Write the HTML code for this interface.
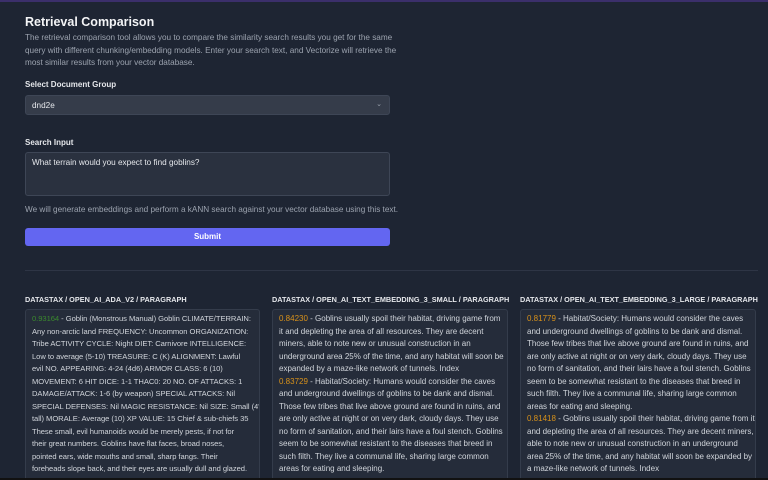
<!DOCTYPE html><html><head><style>
html,body{margin:0;width:768px;height:480px;overflow:hidden}
body{background:#1e2533;font-family:"Liberation Sans",sans-serif;color:#e5e7eb;position:relative}
.top{position:absolute;top:0;left:0;width:768px;height:2px;background:#3b2f6b}
.a{position:absolute}
h1{position:absolute;left:25px;top:15px;margin:0;font-size:12.5px;font-weight:bold;color:#f3f4f6}
.desc{left:25px;top:32px;width:375px;font-size:8.2px;line-height:12.5px;color:#9ca3af}
.lab{font-size:8px;font-weight:bold;color:#e5e7eb}
.box{border:1px solid #3e4656;border-radius:3px;background:#2a313f;box-sizing:border-box}
.hd{font-size:7.3px;font-weight:bold;color:#e5e7eb;white-space:nowrap}
.res{font-size:8px;line-height:12.5px;color:#d1d5db;padding:3px 6px;background:#252c3a;border:1px solid #343c4b;border-radius:3px;box-sizing:border-box;height:175px;overflow:hidden;white-space:nowrap}
.g{color:#3b8a2e}.o{color:#d9921a}
</style></head><body>
<div class="top"></div>
<h1>Retrieval Comparison</h1>
<div class="a desc">The retrieval comparison tool allows you to compare the similarity search results you get for the same query with different chunking/embedding models. Enter your search text, and Vectorize will retrieve the most similar results from your vector database.</div>
<div class="a lab" style="left:25px;top:80px">Select Document Group</div>
<div class="a box" style="left:25px;top:95px;width:365px;height:20px;background:#353c4a;font-size:8.2px;padding:5px 6px;color:#e5e7eb">dnd2e<span style="position:absolute;right:7px;top:4px;color:#9ca3af;font-size:7px">&#8964;</span></div>
<div class="a lab" style="left:25px;top:138px">Search Input</div>
<div class="a box" style="left:25px;top:152px;width:365px;height:44px;font-size:8.2px;padding:5px 6px">What terrain would you expect to find goblins?</div>
<div class="a" style="left:25px;top:205px;font-size:8.2px;color:#9ca3af">We will generate embeddings and perform a kANN search against your vector database using this text.</div>
<div class="a" style="left:25px;top:228px;width:365px;height:18px;background:#6366f1;border-radius:3px;font-size:8px;font-weight:bold;text-align:center;line-height:18px;color:#fff">Submit</div>
<div class="a" style="left:25px;top:270px;width:733px;height:1px;background:#2e3545"></div>
<div class="a hd" style="left:25px;top:295px">DATASTAX / OPEN_AI_ADA_V2 / PARAGRAPH</div>
<div class="a hd" style="left:272px;top:295px">DATASTAX / OPEN_AI_TEXT_EMBEDDING_3_SMALL / PARAGRAPH</div>
<div class="a hd" style="left:520px;top:295px">DATASTAX / OPEN_AI_TEXT_EMBEDDING_3_LARGE / PARAGRAPH</div>
<div class="a res" style="left:25px;top:309px;width:235px;font-size:7.6px;letter-spacing:-0.05px"><span class="g">0.93164</span> - Goblin (Monstrous Manual) Goblin CLIMATE/TERRAIN:<br>Any non-arctic land FREQUENCY: Uncommon ORGANIZATION:<br>Tribe ACTIVITY CYCLE: Night DIET: Carnivore INTELLIGENCE:<br>Low to average (5-10) TREASURE: C (K) ALIGNMENT: Lawful<br>evil NO. APPEARING: 4-24 (4d6) ARMOR CLASS: 6 (10)<br>MOVEMENT: 6 HIT DICE: 1-1 THAC0: 20 NO. OF ATTACKS: 1<br>DAMAGE/ATTACK: 1-6 (by weapon) SPECIAL ATTACKS: Nil<br>SPECIAL DEFENSES: Nil MAGIC RESISTANCE: Nil SIZE: Small (4'<br>tall) MORALE: Average (10) XP VALUE: 15 Chief &amp; sub-chiefs 35<br>These small, evil humanoids would be merely pests, if not for<br>their great numbers. Goblins have flat faces, broad noses,<br>pointed ears, wide mouths and small, sharp fangs. Their<br>foreheads slope back, and their eyes are usually dull and glazed.</div>
<div class="a res" style="left:272px;top:309px;width:236px"><span class="o">0.84230</span> - Goblins usually spoil their habitat, driving game from<br>it and depleting the area of all resources. They are decent<br>miners, able to note new or unusual construction in an<br>underground area 25% of the time, and any habitat will soon be<br>expanded by a maze-like network of tunnels. Index<br><span class="o">0.83729</span> - Habitat/Society: Humans would consider the caves<br>and underground dwellings of goblins to be dank and dismal.<br>Those few tribes that live above ground are found in ruins, and<br>are only active at night or on very dark, cloudy days. They use<br>no form of sanitation, and their lairs have a foul stench. Goblins<br>seem to be somewhat resistant to the diseases that breed in<br>such filth. They live a communal life, sharing large common<br>areas for eating and sleeping.</div>
<div class="a res" style="left:520px;top:309px;width:236px"><span class="o">0.81779</span> - Habitat/Society: Humans would consider the caves<br>and underground dwellings of goblins to be dank and dismal.<br>Those few tribes that live above ground are found in ruins, and<br>are only active at night or on very dark, cloudy days. They use<br>no form of sanitation, and their lairs have a foul stench. Goblins<br>seem to be somewhat resistant to the diseases that breed in<br>such filth. They live a communal life, sharing large common<br>areas for eating and sleeping.<br><span class="o">0.81418</span> - Goblins usually spoil their habitat, driving game from it<br>and depleting the area of all resources. They are decent miners,<br>able to note new or unusual construction in an underground<br>area 25% of the time, and any habitat will soon be expanded by<br>a maze-like network of tunnels. Index</div>
<div class="a" style="left:0;top:478px;width:768px;height:2px;background:#111"></div>
</body></html>
